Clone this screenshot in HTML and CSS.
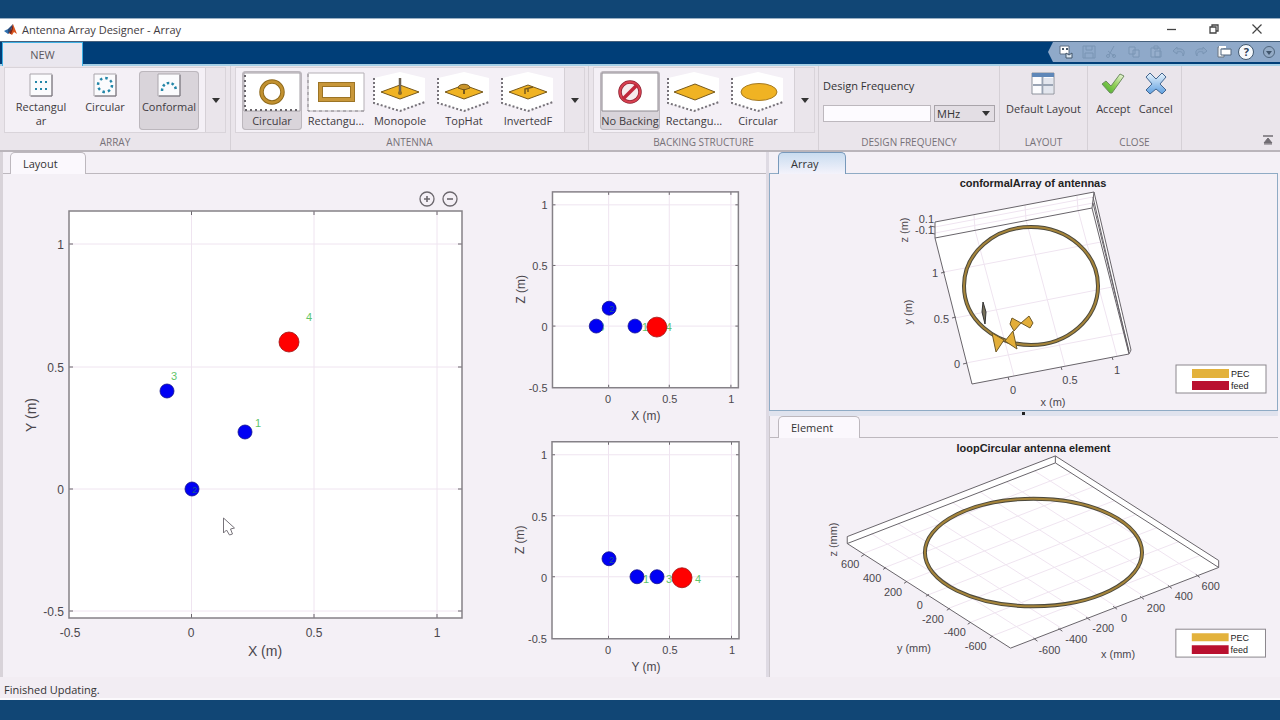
FILE: index.html
```html
<!DOCTYPE html>
<html lang="en">
<head>
<meta charset="utf-8">
<title>Antenna Array Designer - Array</title>
<link rel="stylesheet" href="styles.css">
</head>
<body>
<div class="app">
  <header class="titlebar">
    <svg class="logo" viewBox="0 0 14 14" width="14" height="14"><path d="M0 8l4-2 2 2-2 3z" fill="#2f6fae"/><path d="M4 6l5-5-2 7-3 3 0-2z" fill="#2b4a78"/><path d="M9 1l4 10-3-2-2 3-3-2 3-3z" fill="#d9541e"/><path d="M9 1l-2 6-2 3 2 1 2-5z" fill="#7a2418"/></svg>
    <h1>Antenna Array Designer - Array</h1>
    <div class="window-controls">
      <button aria-label="Minimize"><svg viewBox="0 0 12 12" width="12" height="12"><path d="M2 6.500h9" stroke="#444" stroke-width="1.300"/></svg></button>
      <button aria-label="Restore"><svg viewBox="0 0 12 12" width="12" height="12" fill="none" stroke="#444" stroke-width="1.300"><path d="M2 4h6v6H2zM4 4V2h6v6H8"/></svg></button>
      <button aria-label="Close"><svg viewBox="0 0 12 12" width="12" height="12"><path d="M1.500 1.500l9 9M10.500 1.500l-9 9" stroke="#444" stroke-width="1.200"/></svg></button>
    </div>
  </header>

  <nav class="tabbar">
    <button class="ribbon-tab">NEW</button>
    <div class="quick">
      <button aria-label="Shortcuts"><svg viewBox="0 0 16 16"><path d="M2 2h9v8H2z" fill="#fff" stroke="#5a6c82"/><path d="M4 4h2v2H4zM8 4h2v2H8z" fill="#456"/><path d="M8 9l3 2 3-2v5H8z" fill="#dbe6f0" stroke="#43566b"/></svg></button>
      <button class="off" aria-label="Save"><svg viewBox="0 0 16 16"><path d="M2 2h12v12H2zM5 2v4h6V2M4 14V9h8v5" fill="none" stroke="#64809f"/></svg></button>
      <button class="off" aria-label="Cut"><svg viewBox="0 0 16 16"><path d="M11 2L6 11M5 7l6 5" fill="none" stroke="#64809f"/><circle cx="5" cy="12" r="1.500" fill="none" stroke="#64809f"/><circle cx="11" cy="12" r="1.500" fill="none" stroke="#64809f"/></svg></button>
      <button class="off" aria-label="Copy"><svg viewBox="0 0 16 16"><path d="M3 3h6v7H3zM7 6h6v7H7z" fill="#9db4cf" stroke="#64809f"/></svg></button>
      <button class="off" aria-label="Paste"><svg viewBox="0 0 16 16"><path d="M3 4h9v9H3zM6 2h4v3H6zM7 7h6v6H7z" fill="#9db4cf" stroke="#64809f"/></svg></button>
      <button class="off" aria-label="Undo"><svg viewBox="0 0 16 16"><path d="M6 3L2 7l4 3V8c4-1 6 0 6 4 3-5 0-8-6-7z" fill="#89a3c2" stroke="#64809f"/></svg></button>
      <button class="off" aria-label="Redo"><svg viewBox="0 0 16 16"><path d="M10 3l4 4-4 3V8c-4-1-6 0-6 4-3-5 0-8 6-7z" fill="#89a3c2" stroke="#64809f"/></svg></button>
      <button aria-label="Switch windows"><svg viewBox="0 0 16 16"><path d="M2 3h6v10H2z" fill="#eef1f3" stroke="#6a7480"/><path d="M5 5h10v6H5z" fill="#fff" stroke="#52677f"/><path d="M3 3h7" stroke="#fff" stroke-width="2"/><path d="M5 5h10" stroke="#7d8fa4"/></svg></button>
      <button class="help" aria-label="Help">?</button>
      <button aria-label="More"><svg viewBox="0 0 16 16"><circle cx="8" cy="8" r="5.500" fill="#94abc6" stroke="#4f657d"/><path d="M5 7h6L8 11z" fill="#40556c"/></svg></button>
    </div>
  </nav>

  <section class="ribbon">
    <div class="section">
      <div class="gallery">
        <div class="items">
          <button class="item"><svg class="mini" viewBox="0 0 24 24"><path d="M1 1h22v22H1z" fill="#fbfbfd" stroke="#aaa6ac"/><path d="M2 23h21V2" fill="none" stroke="#77737a"/><g fill="#2386a8"><path d="M6 8h2v2H6zM11 8h2v2h-2zM16 8h2v2h-2zM6 15h2v2H6zM11 15h2v2h-2zM16 15h2v2h-2z"/></g></svg><span>Rectangul<br>ar</span></button>
          <button class="item"><svg class="mini" viewBox="0 0 24 24"><path d="M1 1h22v22H1z" fill="#fbfbfd" stroke="#aaa6ac"/><path d="M2 23h21V2" fill="none" stroke="#77737a"/><circle cx="12" cy="12" r="7" fill="none" stroke="#2386a8" stroke-width="2.500" stroke-dasharray="2.500 3"/></svg><span>Circular</span></button>
          <button class="item selected"><svg class="mini" viewBox="0 0 24 24"><path d="M1 1h22v22H1z" fill="#fbfbfd" stroke="#aaa6ac"/><path d="M2 23h21V2" fill="none" stroke="#77737a"/><path d="M5 18c0-5 3-8 7-8s7 3 7 8" fill="none" stroke="#2386a8" stroke-width="2.500" stroke-dasharray="2.500 2.300"/></svg><span>Conformal</span></button>
        </div>
        <button class="more" aria-label="More arrays"></button>
      </div>
      <h2>ARRAY</h2>
    </div>

    <div class="section">
      <div class="gallery">
        <div class="items">
          <button class="item selected"><svg class="thumb" viewBox="0 0 58 40"><path d="M1 1h56v38H1z" fill="#fff" stroke="#a5a0a6"/><path d="M2 3v35h54" fill="none" stroke="#69656b" stroke-width="2" stroke-dasharray="2 3"/><circle cx="29" cy="20" r="10.500" fill="none" stroke="#8f6a1c" stroke-width="4.500"/><circle cx="29" cy="20" r="10.500" fill="none" stroke="#c2912f" stroke-width="2.500"/></svg><span>Circular</span></button>
          <button class="item"><svg class="thumb" viewBox="0 0 58 40"><path d="M1 1h56v38H1z" fill="#fff" stroke="#b5b0b6"/><path d="M1 2v37h56" fill="none" stroke="#8b878d" stroke-dasharray="3 3"/><path d="M13.500 12.500h32v15h-32z" fill="none" stroke="#9c7425" stroke-width="5"/><path d="M13.500 12.500h32v15h-32z" fill="none" stroke="#c8973a" stroke-width="3"/></svg><span>Rectangu...</span></button>
          <button class="item"><svg class="thumb" viewBox="0 0 58 40"><path d="M3 6l26-6 25 6v23l-25 10L3 31z" fill="#fff"/><path d="M3 6v25l26 8 25-9" fill="none" stroke="#77737a" stroke-width="2" stroke-dasharray="2 2"/><path d="M10 20l19-7 19 7-19 7z" fill="#f0b323" stroke="#77591c"/><path d="M29 6v16" stroke="#6c6253" stroke-width="2.500"/><circle cx="29" cy="21" r="2" fill="#8b6b25"/></svg><span>Monopole</span></button>
          <button class="item"><svg class="thumb" viewBox="0 0 58 40"><path d="M3 6l26-6 25 6v23l-25 10L3 31z" fill="#fff"/><path d="M3 6v25l26 8 25-9" fill="none" stroke="#77737a" stroke-width="2" stroke-dasharray="2 2"/><path d="M10 20l19-7 19 7-19 7z" fill="#f0b323" stroke="#77591c"/><path d="M23 16c0-5 12-5 12 0l-6 2z" fill="#c9942a" stroke="#77591c"/><path d="M29 17v5" stroke="#77591c" stroke-width="2"/></svg><span>TopHat</span></button>
          <button class="item"><svg class="thumb" viewBox="0 0 58 40"><path d="M3 6l26-6 25 6v23l-25 10L3 31z" fill="#fff"/><path d="M3 6v25l26 8 25-9" fill="none" stroke="#77737a" stroke-width="2" stroke-dasharray="2 2"/><path d="M10 20l19-7 19 7-19 7z" fill="#f0b323" stroke="#77591c"/><path d="M26 22v-5l8-2M29 20v-3" fill="none" stroke="#77591c" stroke-width="1.500"/></svg><span>InvertedF</span></button>
        </div>
        <button class="more" aria-label="More antennas"></button>
      </div>
      <h2>ANTENNA</h2>
    </div>

    <div class="section">
      <div class="gallery">
        <div class="items">
          <button class="item selected"><svg class="thumb" viewBox="0 0 58 40"><path d="M1 1h56v38H1z" fill="#fff" stroke="#8e8990"/><circle cx="29" cy="20" r="10" fill="#f6ecee" stroke="#8a2233" stroke-width="3.500"/><circle cx="29" cy="20" r="10" fill="none" stroke="#d8404f" stroke-width="2"/><path d="M22 27l14-14" stroke="#c0283c" stroke-width="3.500"/></svg><span>No Backing</span></button>
          <button class="item"><svg class="thumb" viewBox="0 0 58 40"><path d="M3 6l26-6 25 6v23l-25 10L3 31z" fill="#fff"/><path d="M3 6v25l26 8 25-9" fill="none" stroke="#77737a" stroke-width="2" stroke-dasharray="2 2"/><path d="M9 20l21-8 20 8-20 8z" fill="#f0b323" stroke="#77591c"/></svg><span>Rectangu...</span></button>
          <button class="item"><svg class="thumb" viewBox="0 0 58 40"><path d="M3 6l26-6 25 6v23l-25 10L3 31z" fill="#fff"/><path d="M3 6v25l26 8 25-9" fill="none" stroke="#77737a" stroke-width="2" stroke-dasharray="2 2"/><ellipse cx="30" cy="20" rx="18" ry="8.500" fill="#f0b323" stroke="#a57a22"/></svg><span>Circular</span></button>
        </div>
        <button class="more" aria-label="More backing structures"></button>
      </div>
      <h2>BACKING STRUCTURE</h2>
    </div>

    <div class="section">
      <form class="frequency">
        <label for="freq">Design Frequency</label>
        <div class="frequency-row">
          <input id="freq" type="text">
          <select aria-label="Frequency unit"><option>MHz</option></select>
        </div>
      </form>
      <h2>DESIGN FREQUENCY</h2>
    </div>

    <div class="section">
      <div class="actions">
        <button class="action"><svg viewBox="0 0 24 24" width="24" height="24"><path d="M1 1h22v21H1z" fill="#fcfcfe" stroke="#8d929c"/><path d="M1 1h22v4H1z" fill="#5f87b8"/><path d="M2 13h20M11.500 5v17" stroke="#9aa4b4" stroke-width="2"/><path d="M13 6h9v6h-9zM13 14h9v7h-9z" fill="#e3e6ee"/></svg><span>Default Layout</span></button>
      </div>
      <h2>LAYOUT</h2>
    </div>

    <div class="section">
      <div class="actions">
        <button class="action"><svg viewBox="0 0 24 24" width="24" height="24"><defs><linearGradient id="ok" x1="1" y1="0" x2="0" y2="1"><stop offset="0" stop-color="#f3f8e6"/><stop offset=".5" stop-color="#8fcf55"/><stop offset="1" stop-color="#3fa72a"/></linearGradient></defs><path d="M1 12l4-3 5 5 9-12 4 2-12 17h-2z" fill="url(#ok)" stroke="#6e8d60"/></svg><span>Accept</span></button>
        <button class="action"><svg viewBox="0 0 24 24" width="24" height="24"><defs><linearGradient id="no" x1="0" y1="0" x2="0" y2="1"><stop offset="0" stop-color="#e8f3fc"/><stop offset="1" stop-color="#5e9fe0"/></linearGradient></defs><path d="M6 1l6 6 6-6 4 4-6 7 6 6-4 4-6-5-6 5-4-4 6-6-6-7z" fill="url(#no)" stroke="#44668f" stroke-linejoin="round"/></svg><span>Cancel</span></button>
      </div>
      <h2>CLOSE</h2>
    </div>

    <button class="collapse" aria-label="Collapse toolstrip"><svg viewBox="0 0 12 12" width="12" height="12"><path d="M1 2h10" stroke="#716d73" stroke-width="1.500"/><path d="M2 9l4-5 4 5zM2 10h8" fill="#716d73" stroke="#716d73"/></svg></button>
  </section>

  <main class="workspace">
    <section class="panel layout-panel">
      <div class="strip"><button class="doc-tab">Layout</button></div>
      <div class="figures">
        <div class="main-plot">
          <div class="zoom-tools">
            <button aria-label="Zoom in"><svg viewBox="0 0 16 16" width="16" height="16" fill="none" stroke="#6b676d"><circle cx="8" cy="8" r="7" stroke-width="1.300"/><path d="M5 8h6M8 5v6" stroke-width="1.600"/></svg></button>
            <button aria-label="Zoom out"><svg viewBox="0 0 16 16" width="16" height="16" fill="none" stroke="#6b676d"><circle cx="8" cy="8" r="7" stroke-width="1.300"/><path d="M5 8h6" stroke-width="1.600"/></svg></button>
          </div>
          <svg class="plot large" viewBox="3 208 497 469">
            <rect class="axes" x="69" y="211" width="393" height="407"/>
            <path class="grid" d="M191.500 211v407M314 211v407M437 211v407M69 244h393M69 367h393M69 489h393M69 611h393"/>
            <path class="tick" d="M191.500 211v4M314 211v4M437 211v4M191.500 618v-4M314 618v-4M437 618v-4M69 244h4M69 367h4M69 489h4M69 611h4M462 244h-4M462 367h-4M462 489h-4M462 611h-4"/>
            <rect class="box" x="69" y="211" width="393" height="407"/>
            <g class="end"><text x="64" y="249">1</text><text x="64" y="372">0.5</text><text x="64" y="494">0</text><text x="64" y="616">-0.5</text></g>
            <g class="mid"><text x="70" y="637">-0.5</text><text x="191" y="637">0</text><text x="314" y="637">0.5</text><text x="437" y="637">1</text>
            <text class="axis" x="265" y="656">X (m)</text><text class="axis" transform="translate(36 415) rotate(-90)">Y (m)</text></g>
            <g class="node"><circle cx="167" cy="391" r="7"/><circle cx="245" cy="432" r="7"/><circle cx="192" cy="489" r="7"/></g>
            <circle class="picked" cx="289" cy="342" r="10"/>
            <g class="tag"><text x="171" y="380">3</text><text x="255" y="427">1</text><text x="306" y="321">4</text></g>
            <text class="tag-dim" x="192" y="493">2</text>
            <path d="M223.500 518v15l3-3 3 5 3-1-2-5 4-1z" fill="#fff" stroke="#77737a"/>
          </svg>
        </div>
        <div class="side-plots">
          <svg class="plot" viewBox="500 174 266 253">
            <rect class="axes" x="552" y="192" width="187" height="197"/>
            <path class="grid" d="M608.500 192v197M669.500 192v197M731.500 192v197M552 205h187M552 266h187M552 327h187"/>
            <path class="tick" d="M608.500 192v3M669.500 192v3M731.500 192v3M608.500 389v-3M669.500 389v-3M731.500 389v-3M552 205h3M552 266h3M552 327h3M739 205h-3M739 266h-3M739 327h-3"/>
            <rect class="box" x="552" y="192" width="187" height="197"/>
            <g class="end"><text x="547" y="209">1</text><text x="547" y="271">0.5</text><text x="547" y="332">0</text><text x="547" y="393">-0.5</text></g>
            <g class="mid"><text x="608" y="404">0</text><text x="670" y="404">0.5</text><text x="732" y="404">1</text>
            <text class="axis" x="646" y="421">X (m)</text><text class="axis" transform="translate(524 290) rotate(-90)">Z (m)</text></g>
            <g class="tag"><text x="642" y="332">1</text><text x="598" y="332">3</text><text x="666" y="332">4</text></g>
            <g class="node"><circle cx="609" cy="309" r="7"/><circle cx="596" cy="327" r="7"/><circle cx="635" cy="327" r="7"/></g>
            <circle class="picked" cx="657" cy="328" r="10"/>
            <text class="tag-dim" x="609" y="313">2</text>
          </svg>
          <svg class="plot" viewBox="500 427 266 250">
            <rect class="axes" x="552" y="442" width="187" height="197"/>
            <path class="grid" d="M608.500 442v197M669.500 442v197M731.500 442v197M552 455h187M552 516h187M552 577h187"/>
            <path class="tick" d="M608.500 442v3M669.500 442v3M731.500 442v3M608.500 639v-3M669.500 639v-3M731.500 639v-3M552 455h3M552 516h3M552 577h3M739 455h-3M739 516h-3M739 577h-3"/>
            <rect class="box" x="552" y="442" width="187" height="197"/>
            <g class="end"><text x="547" y="459">1</text><text x="547" y="521">0.5</text><text x="547" y="582">0</text><text x="547" y="643">-0.5</text></g>
            <g class="mid"><text x="608" y="654">0</text><text x="670" y="654">0.5</text><text x="732" y="654">1</text>
            <text class="axis" x="646" y="671">Y (m)</text><text class="axis" transform="translate(524 540) rotate(-90)">Z (m)</text></g>
            <g class="tag"><text x="643" y="583">1</text><text x="666" y="583">3</text><text x="695" y="583">4</text></g>
            <g class="node"><circle cx="609" cy="559" r="7"/><circle cx="637" cy="577" r="7"/><circle cx="657" cy="577" r="7"/></g>
            <circle class="picked" cx="682" cy="578" r="10"/>
            <text class="tag-dim" x="609" y="563">2</text>
          </svg>
        </div>
      </div>
    </section>

    <div class="right">
      <section class="panel array-panel">
        <div class="strip"><button class="doc-tab active">Array</button></div>
        <svg class="plot view3d" viewBox="770 174 507 236">
          <path fill="#fff" d="M935 222L1094 192l37 158-2 4-157 30-37-146z"/>
          <path class="grid" d="M974 215l1 15 39 146M1025 205l1 15 39 146M1077 196l1 14 39 146M944 272l157-30M955 318l157-31M966 363l157-30M935 227l158-30M935 233l158-30"/>
          <path class="edge" d="M935 238v-16l159-30-2 16zM935 238l37 146 157-30-37-146M1094 192l37 158-2 4M1093 197l36 156M1093 203l36 148"/>
          <path class="edge" d="M941 273l4-1M952 318l4-1M963 364l4-1M1008 377l1 3M1061 367l1 3M1112 357l1 3M930 226l5 1M930 233l5 1"/>
          <ellipse class="loop-edge" cx="1031" cy="286" rx="67" ry="59"/>
          <ellipse class="loop" cx="1031" cy="286" rx="67" ry="59"/>
          <path d="M983 302l3 10-1 12-3-12z" fill="#77705a" stroke="#333"/>
          <g fill="#e3ae39" stroke="#6f5926"><path d="M992 333l12 7-8 12zM1005 341l8-10 4 18zM1012 318l9 5-7 8-4-7zM1021 323l8-7 4 7-3 5z"/></g>
          <g class="mid"><text class="title" x="1033" y="187">conformalArray of antennas</text>
          <text x="1013" y="394">0</text><text x="1070" y="384">0.5</text><text x="1117" y="374">1</text><text x="1053" y="406">x (m)</text>
          <text transform="translate(908 230) rotate(-90)">z (m)</text><text transform="translate(912 312) rotate(-90)">y (m)</text></g>
          <g class="end"><text x="934" y="223">0.1</text><text x="934" y="234">-0.1</text><text x="938" y="277">1</text><text x="949" y="323">0.5</text><text x="960" y="368">0</text></g>
          <g class="legend"><rect class="legend-box" x="1176" y="365" width="90" height="28"/><path d="M1192 369h37v9h-37z" fill="#e3b23c"/><path d="M1192 381h37v9h-37z" fill="#b9102f"/><text x="1231" y="377">PEC</text><text x="1231" y="389">feed</text></g>
        </svg>
      </section>
      <div class="splitter"></div>
      <section class="panel element-panel">
        <div class="strip"><button class="doc-tab">Element</button></div>
        <svg class="plot view3d" viewBox="770 437 507 240">
          <path fill="#fff" d="M846 536L1055 455l164 105v7l-209 81-164-105z"/>
          <path class="grid" d="M862 553l209-81M884 567l209-81M905 581l209-81M926 595l209-81M948 608l209-81M970 622l209-81M991 636l209-81M1034 638L870 533M1061 628L897 523M1089 618L924 512M1117 607L952 502M1144 596L979 491M1170 586L1006 481M1198 575L1034 470"/>
          <path class="edge" d="M846 543v-7l209-81 164 105v7l-209 81zM1055 455v7l164 105M1055 462L846 543"/>
          <path class="edge" d="M860 556l3-2M882 569l3-2M903 583l3-2M925 596l3-2M946 610l3-2M967 624l3-2M989 638l3-2M1037 641l-4-3M1062 631l-4-3M1090 620l-4-3M1117 609l-4-3M1144 599l-4-3M1172 588l-4-3M1200 577l-4-3"/>
          <ellipse class="loop-edge" cx="1033" cy="552" rx="109" ry="54"/>
          <ellipse class="loop" cx="1033" cy="552" rx="109" ry="54"/>
          <g class="mid"><text class="title" x="1033" y="451">loopCircular antenna element</text>
          <text x="849" y="568">600</text><text x="871" y="582">400</text><text x="892" y="596">200</text><text x="919" y="609">0</text><text x="932" y="623">-200</text><text x="954" y="636">-400</text><text x="975" y="650">-600</text>
          <text x="1049" y="654">-600</text><text x="1076" y="643">-400</text><text x="1103" y="632">-200</text><text x="1124" y="622">0</text><text x="1156" y="612">200</text><text x="1184" y="600">400</text><text x="1211" y="590">600</text>
          <text x="913" y="652">y (mm)</text><text x="1118" y="658">x (mm)</text><text transform="translate(836 539) rotate(-90)">z (mm)</text></g>
          <g class="legend"><rect class="legend-box" x="1176" y="629" width="90" height="28"/><path d="M1192 633h37v8h-37z" fill="#e3b23c"/><path d="M1192 645h37v9h-37z" fill="#b9102f"/><text x="1231" y="641">PEC</text><text x="1231" y="653">feed</text></g>
        </svg>
      </section>
    </div>
  </main>

  <footer class="status">Finished Updating.</footer>
</div>
</body>
</html>
```
FILE: styles.css
```css
* { box-sizing: border-box; }

body {
  margin: 0;
  background: #114675;
  color: #3f3b41;
  font: 11px/14px "Open Sans", "Noto Sans", sans-serif;
}

button {
  margin: 0;
  padding: 0;
  border: 0;
  background: none;
  color: inherit;
  font: inherit;
}

h1, h2 { margin: 0; font-size: 11px; font-weight: 400; }
svg { display: block; }

.app {
  display: flex;
  flex-direction: column;
  height: 100vh;
  padding: 18px 0 20px;
}

/* Window title */
.titlebar {
  display: flex;
  align-items: center;
  gap: 4px;
  height: 23px;
  padding: 0 17px 0 4px;
  background: #fff;
  border-top: 1px solid #9ab0c4;
}
.window-controls { display: flex; gap: 31px; margin-left: auto; padding-bottom: 2px; }

/* Ribbon tabs and quick access */
.tabbar {
  display: flex;
  justify-content: space-between;
  height: 25px;
  padding-left: 2px;
  background: #003e78;
  border-top: 1px solid #46607c;
  border-bottom: 2px solid #a5cfe6;
}
.ribbon-tab {
  width: 81px;
  height: 24px;
  background: #eae7ef;
  border: 1px solid #3fb0e4;
  border-bottom: 0;
  color: #5c585e;
}
.quick {
  display: flex;
  align-items: center;
  justify-content: space-between;
  width: 232px;
  height: 20px;
  padding: 0 3px 0 10px;
  background: #8fa9c9;
  clip-path: polygon(0 50%, 5px 0, 100% 0, 100% 100%, 5px 100%);
}
.quick button { width: 16px; height: 16px; }
.off { opacity: 0.5; }
.quick .help {
  border: 1px solid #42586f;
  border-radius: 50%;
  background: #f6f9fc;
  color: #2c4058;
  font-weight: 700;
  line-height: 14px;
}

/* Ribbon */
.ribbon {
  display: grid;
  grid-template-columns: 231px 358px 230px 181px 88px 94px 1fr;
  height: 86px;
  background: #eae5eb;
  border-bottom: 2px solid #bab5bb;
}
.section {
  display: flex;
  flex-direction: column;
  justify-content: space-between;
  padding: 1px 4px 0;
  border-right: 1px solid #d5d0d6;
}
.section h2 { line-height: 16px; text-align: center; color: #767178; font-size: 10px; }
.gallery {
  display: flex;
  align-self: start;
  height: 66px;
  background: #f4f0f6;
  border: 1px solid #d9d4da;
}
.items { display: flex; padding: 3px 4px 2px; }
.item {
  display: flex;
  flex-direction: column;
  align-items: center;
  width: 60px;
  margin: 0 2px;
  border-radius: 4px;
  white-space: nowrap;
}
.selected { background: #d9d4da; box-shadow: inset 0 0 0 1px #bcb7bd; }
.mini { width: 24px; height: 24px; margin: 2px 0 3px; flex: none; }
.thumb { width: 58px; height: 40px; margin: 1px 0 2px; flex: none; }
.more {
  width: 20px;
  background: #eae5eb;
  border-left: 1px solid #d5d0d6;
}
.more::before {
  content: "";
  display: block;
  width: 0;
  margin: 0 auto;
  border: 4px solid transparent;
  border-top: 5px solid #333;
  border-bottom: 0;
}
.frequency { padding-top: 12px; color: #333; }
.frequency-row { position: relative; display: flex; gap: 3px; margin-top: 12px; }
.frequency-row::after {
  content: "";
  position: absolute;
  right: 5px;
  top: 6px;
  border: 4px solid transparent;
  border-top: 5px solid #333;
  border-bottom: 0;
}
.frequency input {
  width: 108px;
  height: 17px;
  border: 1px solid #bdb8be;
  background: #fdfbff;
}
.frequency select {
  width: 62px;
  height: 17px;
  padding: 0 2px;
  border: 1px solid #a9a4aa;
  border-radius: 0;
  background: #e3dee4;
  color: #333;
  font: inherit;
  line-height: 14px;
  appearance: none;
}
.actions { display: flex; justify-content: space-around; padding-top: 5px; }
.action { display: flex; flex-direction: column; align-items: center; gap: 6px; white-space: nowrap; }
.collapse { align-self: end; justify-self: end; margin: 0 6px 4px 0; }

/* Documents */
.workspace {
  display: grid;
  grid-template-columns: 766fr 512fr;
  flex: 1;
  min-height: 0;
  padding-right: 2px;
  background: #f4f0f6;
}
.panel { display: flex; flex-direction: column; min-height: 0; }
.layout-panel { border-left: 3px solid #d8d3d9; }
.strip { display: flex; flex: none; height: 22px; padding-left: 7px; border-bottom: 1px solid #bdb8be; }
.doc-tab {
  width: 76px;
  height: 22px;
  padding: 0 12px;
  background: #fbf8fd;
  border: 1px solid #bdb8be;
  border-bottom: 0;
  border-radius: 5px 5px 0 0;
  color: #333;
  text-align: left;
}
.figures { display: grid; grid-template-columns: 497fr 266fr; flex: 1; min-height: 0; }
.main-plot, .side-plots { display: flex; flex-direction: column; min-width: 0; min-height: 0; }
.zoom-tools { display: flex; justify-content: flex-end; gap: 7px; padding: 17px 42px 1px 0; }
.plot { flex: 1; width: 100%; min-height: 0; }

.right { display: flex; flex-direction: column; min-height: 0; border-left: 3px solid #dedae3; }
.array-panel { flex: 259; }
.array-panel .view3d { border: 1px solid #8fabc5; border-top: 0; }
.array-panel .strip { padding-left: 9px; border-bottom-color: #8fabc5; }
.doc-tab.active { width: 68px; border-color: #7899bb; background: linear-gradient(#c9dcf0, #f4f3fb); }
.element-panel { flex: 261; border-left: 1px solid #cbc6cc; }
.element-panel .strip { padding-left: 8px; }
.element-panel .doc-tab { width: 82px; }
.splitter { display: flex; justify-content: center; height: 5px; background: #e0e3ee; }
.splitter::before { content: ""; width: 3px; height: 3px; margin-top: 1px; background: #222; }

/* Plots */
.plot text { font: 11px "Liberation Sans", sans-serif; fill: #4b474d; }
.plot .axis { font-size: 12px; }
.large text { font-size: 12px; }
.large .axis { font-size: 14px; }
.plot .title { font-weight: 700; fill: #222; }
.end { text-anchor: end; }
.mid { text-anchor: middle; }
.axes { fill: #fff; }
.grid { fill: none; stroke: #efe4f0; }
.tick { stroke: #6b676d; }
.box { fill: none; stroke: #858187; stroke-width: 1.5; }
.edge { fill: none; stroke: #68646a; }
.node { fill: #0000f4; stroke: #10108c; stroke-width: 0.8; }
.picked { fill: #f00; stroke: #a01010; stroke-width: 0.8; }
.plot .tag text { font-size: 11px; fill: #5fc56a; }
.plot .tag-dim { font-size: 9px; fill: #1a5a8c; }
.loop-edge { fill: none; stroke: #4c493c; stroke-width: 4; }
.loop { fill: none; stroke: #a5843a; stroke-width: 2; }
.legend-box { fill: #fff; stroke: #8b878d; }
.plot .legend text { font-size: 9px; fill: #222; }

.status {
  height: 23px;
  padding: 6px 4px 0;
  background: #f2edf3;
  border-bottom: 2px solid #fbf9fc;
  color: #333;
}
```
